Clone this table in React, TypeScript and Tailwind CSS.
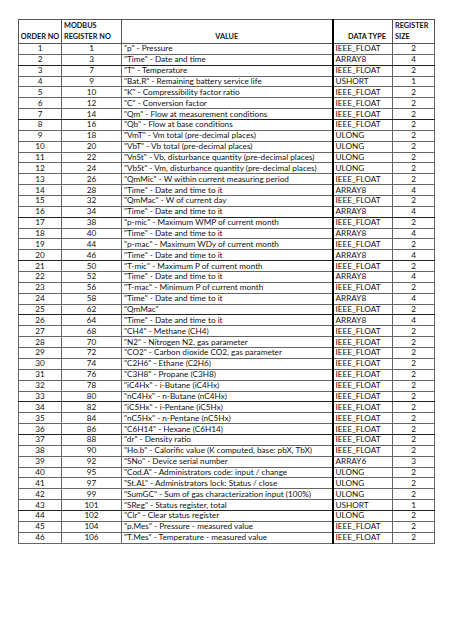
const rows: [number, number, string, string, number][] = [
  [1, 1, '"p" - Pressure', 'IEEE_FLOAT', 2],
  [2, 3, '"Time" - Date and time', 'ARRAY8', 4],
  [3, 7, '"T" - Temperature', 'IEEE_FLOAT', 2],
  [4, 9, '"Bat.R" - Remaining battery service life', 'USHORT', 1],
  [5, 10, '"K" - Compressibility factor ratio', 'IEEE_FLOAT', 2],
  [6, 12, '"C" - Conversion factor', 'IEEE_FLOAT', 2],
  [7, 14, '"Qm" - Flow at measurement conditions', 'IEEE_FLOAT', 2],
  [8, 16, '"Qb" - Flow at base conditions', 'IEEE_FLOAT', 2],
  [9, 18, '"VmT" - Vm total (pre-decimal places)', 'ULONG', 2],
  [10, 20, '"VbT" - Vb total (pre-decimal places)', 'ULONG', 2],
  [11, 22, '"VnSt" - Vb, disturbance quantity (pre-decimal places)', 'ULONG', 2],
  [12, 24, '"VbSt" - Vm, disturbance quantity (pre-decimal places)', 'ULONG', 2],
  [13, 26, '"QmMic" - W within current measuring period', 'IEEE_FLOAT', 2],
  [14, 28, '"Time" - Date and time to it', 'ARRAY8', 4],
  [15, 32, '"QmMac" - W of current day', 'IEEE_FLOAT', 2],
  [16, 34, '"Time" - Date and time to it', 'ARRAY8', 4],
  [17, 38, '"p-mic" - Maximum WMP of current month', 'IEEE_FLOAT', 2],
  [18, 40, '"Time" - Date and time to it', 'ARRAY8', 4],
  [19, 44, '"p-mac" - Maximum WDy of current month', 'IEEE_FLOAT', 2],
  [20, 46, '"Time" - Date and time to it', 'ARRAY8', 4],
  [21, 50, '"T-mic" - Maximum P of current month', 'IEEE_FLOAT', 2],
  [22, 52, '"Time" - Date and time to it', 'ARRAY8', 4],
  [23, 56, '"T-mac" - Minimum P of current month', 'IEEE_FLOAT', 2],
  [24, 58, '"Time" - Date and time to it', 'ARRAY8', 4],
  [25, 62, '"QmMac"', 'IEEE_FLOAT', 2],
  [26, 64, '"Time" - Date and time to it', 'ARRAY8', 4],
  [27, 68, '"CH4" - Methane (CH4)', 'IEEE_FLOAT', 2],
  [28, 70, '"N2" - Nitrogen N2, gas parameter', 'IEEE_FLOAT', 2],
  [29, 72, '"CO2" - Carbon dioxide CO2, gas parameter', 'IEEE_FLOAT', 2],
  [30, 74, '"C2H6" - Ethane (C2H6)', 'IEEE_FLOAT', 2],
  [31, 76, '"C3H8" - Propane (C3H8)', 'IEEE_FLOAT', 2],
  [32, 78, '"iC4Hx" - i-Butane (iC4Hx)', 'IEEE_FLOAT', 2],
  [33, 80, '"nC4Hx" - n-Butane (nC4Hx)', 'IEEE_FLOAT', 2],
  [34, 82, '"iC5Hx" - i-Pentane (iC5Hx)', 'IEEE_FLOAT', 2],
  [35, 84, '"nC5Hx" - n-Pentane (nC5Hx)', 'IEEE_FLOAT', 2],
  [36, 86, '"C6H14" - Hexane (C6H14)', 'IEEE_FLOAT', 2],
  [37, 88, '"dr" - Density ratio', 'IEEE_FLOAT', 2],
  [38, 90, '"Ho.b" - Calorific value (K computed, base: pbX, TbX)', 'IEEE_FLOAT', 2],
  [39, 92, '"SNo" - Device serial number', 'ARRAY6', 3],
  [40, 95, '"Cod.A" - Administrators code: input / change', 'ULONG', 2],
  [41, 97, '"St.AL" - Administrators lock: Status / close', 'ULONG', 2],
  [42, 99, '"SumGC" - Sum of gas characterization input (100%)', 'ULONG', 2],
  [43, 101, '"SReg" - Status register, total', 'USHORT', 1],
  [44, 102, '"Clr" - Clear status register', 'ULONG', 2],
  [45, 104, '"p.Mes" - Pressure - measured value', 'IEEE_FLOAT', 2],
  [46, 106, '"T.Mes" - Temperature - measured value', 'IEEE_FLOAT', 2],
];

// rows whose bottom line came out darker in the scan
const darkAfter = new Set([2, 7, 16, 20, 25, 33, 36, 43]);

export default function App() {
  return (
    <div className="w-[474px] h-[632px] bg-white pt-[19px] pl-[18px] font-['Lato','Liberation_Sans',sans-serif] text-[8.2px] text-[#111]">
      <table className="table-fixed border-collapse w-[416px] border border-[#555]">
        <colgroup>
          <col className="w-[43px]" />
          <col className="w-[60px]" />
          <col className="w-[211px]" />
          <col className="w-[60px]" />
          <col className="w-[42px]" />
        </colgroup>
        <thead>
          <tr className="h-[24px] font-bold leading-[11px] text-[7.3px]">
            <th className="border border-[#555] align-bottom text-center px-[1px] pb-[1px] whitespace-nowrap">ORDER NO</th>
            <th className="border border-[#555] align-bottom text-left px-[2px] pb-[1px] whitespace-nowrap">
              MODBUS
              <br />
              REGISTER NO
            </th>
            <th className="border border-[#555] border-r-2 border-r-black align-bottom text-center pb-[1px]">VALUE</th>
            <th className="border border-[#555] align-bottom text-right pr-[6px] pb-[1px] whitespace-nowrap">DATA TYPE</th>
            <th className="border border-[#555] align-bottom text-left px-[2px] pb-[1px]">
              REGISTER
              <br />
              SIZE
            </th>
          </tr>
        </thead>
        <tbody>
          {rows.map(([order, reg, value, type, size]) => {
            const line = darkAfter.has(order) ? 'border-b-[1.5px] border-b-[#222]' : '';
            return (
              <tr key={order} className="h-[10.87px] leading-[9px]">
                <td className={`border border-[#666] text-center ${line}`}>{order}</td>
                <td className={`border border-[#666] text-center ${line}`}>{reg}</td>
                <td className={`border border-[#666] border-r-2 border-r-black pl-[2px] whitespace-nowrap overflow-hidden ${line}`}>{value}</td>
                <td className={`border border-[#666] pl-[2px] ${line}`}>{type}</td>
                <td className={`border border-[#666] text-center ${line}`}>{size}</td>
              </tr>
            );
          })}
        </tbody>
      </table>
    </div>
  );
}
